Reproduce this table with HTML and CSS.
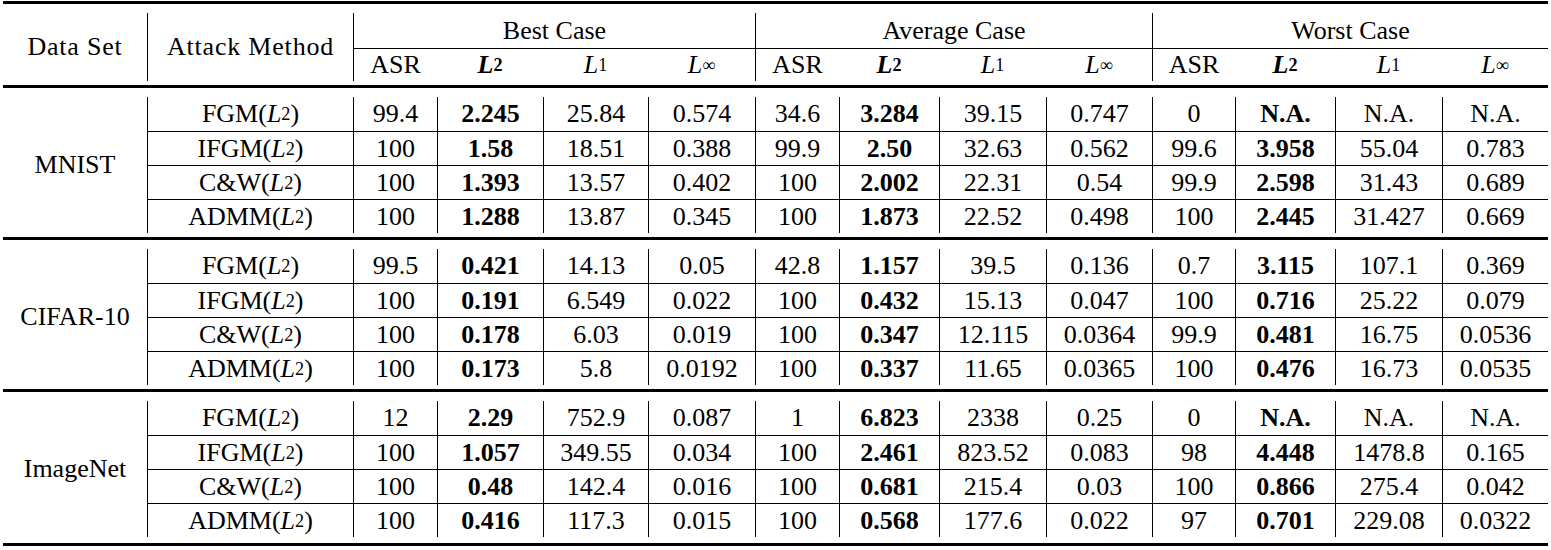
FILE: index.html
```html
<!DOCTYPE html>
<html lang="en">
<head>
<meta charset="utf-8">
<title>Attack comparison table</title>
<link rel="stylesheet" href="styles.css">
</head>
<body>
<div class="table">
  <div class="rule top"></div>

  <div class="cell span2 wide">Data Set</div>
  <div class="cell span2 vl wide">Attack Method</div>
  <div class="cell h1 span4c vl bb">Best Case</div>
  <div class="cell h1 span4c vl bb">Average Case</div>
  <div class="cell h1 span4c vl bb">Worst Case</div>

  <div class="cell h2 vl">ASR</div>
  <div class="cell h2 bold"><i>L</i><sub>2</sub></div>
  <div class="cell h2"><i>L</i><sub>1</sub></div>
  <div class="cell h2"><i>L</i><sub>∞</sub></div>
  <div class="cell h2 vl">ASR</div>
  <div class="cell h2 bold"><i>L</i><sub>2</sub></div>
  <div class="cell h2"><i>L</i><sub>1</sub></div>
  <div class="cell h2"><i>L</i><sub>∞</sub></div>
  <div class="cell h2 vl">ASR</div>
  <div class="cell h2 bold"><i>L</i><sub>2</sub></div>
  <div class="cell h2"><i>L</i><sub>1</sub></div>
  <div class="cell h2"><i>L</i><sub>∞</sub></div>

  <div class="rule"></div>

  <!-- MNIST -->
  <div class="row">
    <div class="cell span4r">MNIST</div>
    <div class="cell d">FGM(<i>L</i><sub>2</sub>)</div>
    <div class="cell d">99.4</div><div class="cell d bold">2.245</div><div class="cell d">25.84</div><div class="cell d">0.574</div>
    <div class="cell d">34.6</div><div class="cell d bold">3.284</div><div class="cell d">39.15</div><div class="cell d">0.747</div>
    <div class="cell d">0</div><div class="cell d bold">N.A.</div><div class="cell d">N.A.</div><div class="cell d">N.A.</div>
  </div>
  <div class="row sep">
    <div class="cell d">IFGM(<i>L</i><sub>2</sub>)</div>
    <div class="cell d">100</div><div class="cell d bold">1.58</div><div class="cell d">18.51</div><div class="cell d">0.388</div>
    <div class="cell d">99.9</div><div class="cell d bold">2.50</div><div class="cell d">32.63</div><div class="cell d">0.562</div>
    <div class="cell d">99.6</div><div class="cell d bold">3.958</div><div class="cell d">55.04</div><div class="cell d">0.783</div>
  </div>
  <div class="row sep">
    <div class="cell d">C&amp;W(<i>L</i><sub>2</sub>)</div>
    <div class="cell d">100</div><div class="cell d bold">1.393</div><div class="cell d">13.57</div><div class="cell d">0.402</div>
    <div class="cell d">100</div><div class="cell d bold">2.002</div><div class="cell d">22.31</div><div class="cell d">0.54</div>
    <div class="cell d">99.9</div><div class="cell d bold">2.598</div><div class="cell d">31.43</div><div class="cell d">0.689</div>
  </div>
  <div class="row sep">
    <div class="cell d">ADMM(<i>L</i><sub>2</sub>)</div>
    <div class="cell d">100</div><div class="cell d bold">1.288</div><div class="cell d">13.87</div><div class="cell d">0.345</div>
    <div class="cell d">100</div><div class="cell d bold">1.873</div><div class="cell d">22.52</div><div class="cell d">0.498</div>
    <div class="cell d">100</div><div class="cell d bold">2.445</div><div class="cell d">31.427</div><div class="cell d">0.669</div>
  </div>

  <div class="rule"></div>

  <!-- CIFAR-10 -->
  <div class="row">
    <div class="cell span4r">CIFAR-10</div>
    <div class="cell d">FGM(<i>L</i><sub>2</sub>)</div>
    <div class="cell d">99.5</div><div class="cell d bold">0.421</div><div class="cell d">14.13</div><div class="cell d">0.05</div>
    <div class="cell d">42.8</div><div class="cell d bold">1.157</div><div class="cell d">39.5</div><div class="cell d">0.136</div>
    <div class="cell d">0.7</div><div class="cell d bold">3.115</div><div class="cell d">107.1</div><div class="cell d">0.369</div>
  </div>
  <div class="row sep">
    <div class="cell d">IFGM(<i>L</i><sub>2</sub>)</div>
    <div class="cell d">100</div><div class="cell d bold">0.191</div><div class="cell d">6.549</div><div class="cell d">0.022</div>
    <div class="cell d">100</div><div class="cell d bold">0.432</div><div class="cell d">15.13</div><div class="cell d">0.047</div>
    <div class="cell d">100</div><div class="cell d bold">0.716</div><div class="cell d">25.22</div><div class="cell d">0.079</div>
  </div>
  <div class="row sep">
    <div class="cell d">C&amp;W(<i>L</i><sub>2</sub>)</div>
    <div class="cell d">100</div><div class="cell d bold">0.178</div><div class="cell d">6.03</div><div class="cell d">0.019</div>
    <div class="cell d">100</div><div class="cell d bold">0.347</div><div class="cell d">12.115</div><div class="cell d">0.0364</div>
    <div class="cell d">99.9</div><div class="cell d bold">0.481</div><div class="cell d">16.75</div><div class="cell d">0.0536</div>
  </div>
  <div class="row sep">
    <div class="cell d">ADMM(<i>L</i><sub>2</sub>)</div>
    <div class="cell d">100</div><div class="cell d bold">0.173</div><div class="cell d">5.8</div><div class="cell d">0.0192</div>
    <div class="cell d">100</div><div class="cell d bold">0.337</div><div class="cell d">11.65</div><div class="cell d">0.0365</div>
    <div class="cell d">100</div><div class="cell d bold">0.476</div><div class="cell d">16.73</div><div class="cell d">0.0535</div>
  </div>

  <div class="rule"></div>

  <!-- ImageNet -->
  <div class="row">
    <div class="cell span4r">ImageNet</div>
    <div class="cell d">FGM(<i>L</i><sub>2</sub>)</div>
    <div class="cell d">12</div><div class="cell d bold">2.29</div><div class="cell d">752.9</div><div class="cell d">0.087</div>
    <div class="cell d">1</div><div class="cell d bold">6.823</div><div class="cell d">2338</div><div class="cell d">0.25</div>
    <div class="cell d">0</div><div class="cell d bold">N.A.</div><div class="cell d">N.A.</div><div class="cell d">N.A.</div>
  </div>
  <div class="row sep">
    <div class="cell d">IFGM(<i>L</i><sub>2</sub>)</div>
    <div class="cell d">100</div><div class="cell d bold">1.057</div><div class="cell d">349.55</div><div class="cell d">0.034</div>
    <div class="cell d">100</div><div class="cell d bold">2.461</div><div class="cell d">823.52</div><div class="cell d">0.083</div>
    <div class="cell d">98</div><div class="cell d bold">4.448</div><div class="cell d">1478.8</div><div class="cell d">0.165</div>
  </div>
  <div class="row sep">
    <div class="cell d">C&amp;W(<i>L</i><sub>2</sub>)</div>
    <div class="cell d">100</div><div class="cell d bold">0.48</div><div class="cell d">142.4</div><div class="cell d">0.016</div>
    <div class="cell d">100</div><div class="cell d bold">0.681</div><div class="cell d">215.4</div><div class="cell d">0.03</div>
    <div class="cell d">100</div><div class="cell d bold">0.866</div><div class="cell d">275.4</div><div class="cell d">0.042</div>
  </div>
  <div class="row sep">
    <div class="cell d">ADMM(<i>L</i><sub>2</sub>)</div>
    <div class="cell d">100</div><div class="cell d bold">0.416</div><div class="cell d">117.3</div><div class="cell d">0.015</div>
    <div class="cell d">100</div><div class="cell d bold">0.568</div><div class="cell d">177.6</div><div class="cell d">0.022</div>
    <div class="cell d">97</div><div class="cell d bold">0.701</div><div class="cell d">229.08</div><div class="cell d">0.0322</div>
  </div>

  <div class="rule bottom"></div>
</div>
</body>
</html>
```

FILE: styles.css
```css
* {
  box-sizing: border-box;
}

body {
  margin: 0;
  background: #fff;
  color: #000;
  font-family: "Liberation Serif", "Times New Roman", serif;
  font-size: 26px;
}

.table {
  display: grid;
  grid-template-columns: 144px 206px 84px 106px 105px 107px 84px 100px 107px 106px 83px 100px 107px 106px;
  width: 1545px;
  margin-left: 3px;
}

.rule {
  grid-column: 1 / -1;
  height: 3px;
  background: #000;
  margin: 4px 0 9px;
}

.rule.top {
  margin: 1px 0 9px;
}

.rule.bottom {
  margin: 6px 0 0;
}

.cell {
  display: flex;
  align-items: center;
  justify-content: center;
  white-space: nowrap;
  line-height: 1;
}

.wide {
  letter-spacing: 0.8px;
}

.h1 {
  height: 36px;
}

.h2 {
  height: 32px;
}

.span2 {
  grid-row: span 2;
}

.span4c {
  grid-column: span 4;
}

.span4r {
  grid-row: span 4;
}

.vl {
  border-left: 1px solid #000;
}

.bb {
  border-bottom: 1px solid #000;
}

.row {
  display: contents;
}

.row > .d {
  height: 34px;
  border-left: 1px solid #000;
}

.row.sep > .d {
  border-top: 1px solid #000;
}

.bold {
  font-weight: bold;
}

sub {
  font-size: 0.7em;
  line-height: 0;
  vertical-align: -0.35em;
}
```
